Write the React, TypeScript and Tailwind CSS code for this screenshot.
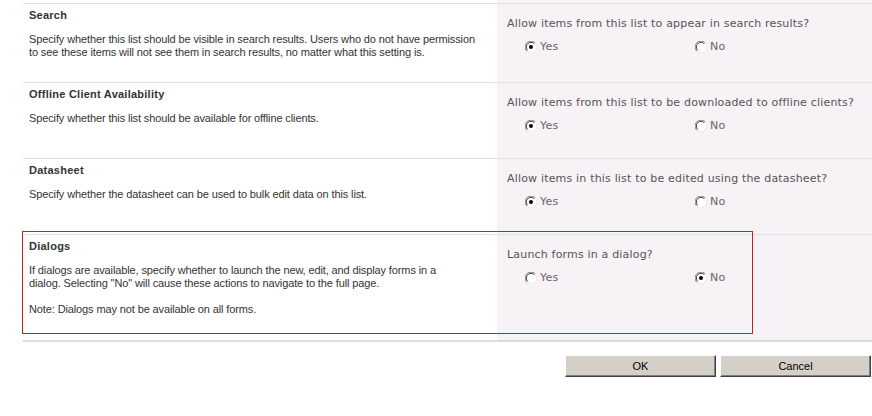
import React from "react";

type Section = {
  title: string;
  desc: string[];
  note?: string;
  question: string;
  value: "yes" | "no";
  highlight?: boolean;
};

const sections: Section[] = [
  {
    title: "Search",
    desc: [
      "Specify whether this list should be visible in search results. Users who do not have permission",
      "to see these items will not see them in search results, no matter what this setting is.",
    ],
    question: "Allow items from this list to appear in search results?",
    value: "yes",
  },
  {
    title: "Offline Client Availability",
    desc: ["Specify whether this list should be available for offline clients."],
    question: "Allow items from this list to be downloaded to offline clients?",
    value: "yes",
  },
  {
    title: "Datasheet",
    desc: ["Specify whether the datasheet can be used to bulk edit data on this list."],
    question: "Allow items in this list to be edited using the datasheet?",
    value: "yes",
  },
  {
    title: "Dialogs",
    desc: [
      "If dialogs are available, specify whether to launch the new, edit, and display forms in a",
      'dialog. Selecting "No" will cause these actions to navigate to the full page.',
    ],
    note: "Note: Dialogs may not be available on all forms.",
    question: "Launch forms in a dialog?",
    value: "no",
    highlight: true,
  },
];

// classic windows radio button
function Radio({ checked }: { checked: boolean }) {
  return (
    <svg width="12" height="12" viewBox="0 0 12 12" className="shrink-0">
      <circle cx="6" cy="6" r="5.5" fill="#fff" />
      <path d="M10.2 1.8 A5.5 5.5 0 0 0 1.8 10.2" fill="none" stroke="#808080" strokeWidth="1" />
      <path d="M9.3 2.7 A4.4 4.4 0 0 0 2.7 9.3" fill="none" stroke="#404040" strokeWidth="1" />
      <path d="M1.8 10.2 A5.5 5.5 0 0 0 10.2 1.8" fill="none" stroke="#e8e8e8" strokeWidth="1" />
      {checked && <circle cx="6" cy="6" r="2" fill="#000" />}
    </svg>
  );
}

function Option({ label, checked }: { label: string; checked: boolean }) {
  return (
    <label className="flex items-center gap-[3px]">
      <Radio checked={checked} />
      <span>{label}</span>
    </label>
  );
}

function Row({ s, height }: { s: Section; height: string }) {
  return (
    <div className={`flex border-t border-[#e1e1e1] ${height}`}>
      <div className="w-[474px] pl-[6px] pt-[5px] text-[#333] font-['Liberation_Sans',sans-serif] text-[11px] leading-[13px] tracking-[-0.12px]">
        <div className="font-bold text-[11px] mb-[11px] tracking-[0.25px]">{s.title}</div>
        {s.desc.map((d) => (
          <div key={d}>{d}</div>
        ))}
        {s.note && <div className="mt-[13px]">{s.note}</div>}
      </div>
      <div className="flex-1 bg-[#f6f2f5] pl-[10px] pt-[13px] text-[#555] font-['DejaVu_Sans',sans-serif] text-[11px] leading-[13px] tracking-[0.18px]">
        <div>{s.question}</div>
        <div className="flex mt-[10px] pl-[18px] text-[#666]">
          <div className="w-[170px]">
            <Option label="Yes" checked={s.value === "yes"} />
          </div>
          <Option label="No" checked={s.value === "no"} />
        </div>
      </div>
    </div>
  );
}

function Btn({ children }: { children: React.ReactNode }) {
  return (
    <button className="w-[151px] h-[22px] bg-[#d4d0c8] text-[11px] text-black font-['Liberation_Sans',sans-serif] border border-t-white border-l-white border-r-[#404040] border-b-[#404040] shadow-[inset_-1px_-1px_0_#808080]">
      {children}
    </button>
  );
}

export default function App() {
  return (
    <div className="w-[872px] h-[416px] bg-white overflow-hidden pl-[23px]">
      <div className="flex h-[3px]">
        <div className="w-[474px]" />
        <div className="flex-1 bg-[#f6f2f5]" />
      </div>
      <div>
        <Row s={sections[0]} height="h-[79px]" />
        <Row s={sections[1]} height="h-[76px]" />
        <Row s={sections[2]} height="h-[76px]" />
        <div className="relative">
          <Row s={sections[3]} height="h-[106px]" />
          <div className="absolute left-[-1px] top-[-3px] w-[731px] h-[103px] border border-[#c81e28] pointer-events-none" />
        </div>
        <div className="h-[2px] bg-[#dcdcdc]" />
      </div>
      <div className="flex gap-[4px] pl-[542px] mt-[13px]">
        <Btn>OK</Btn>
        <Btn>Cancel</Btn>
      </div>
    </div>
  );
}
